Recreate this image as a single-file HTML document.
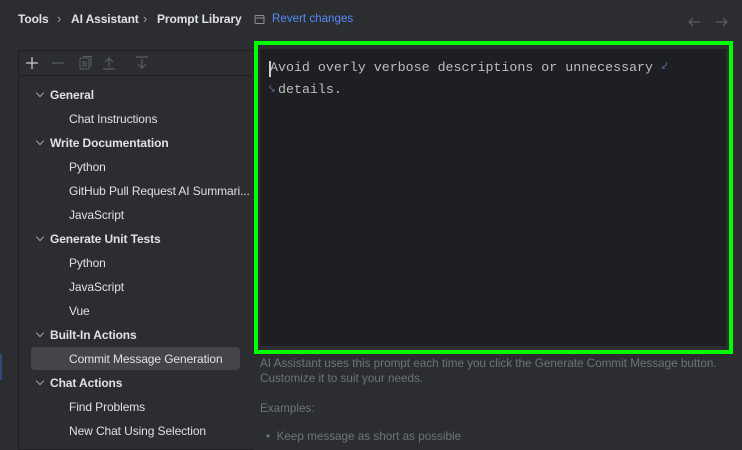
<!DOCTYPE html>
<html><head><meta charset="utf-8"><style>
*{margin:0;padding:0;box-sizing:border-box}
body{width:742px;height:446px;background:#2b2d30;overflow:hidden;position:relative;font-family:"Liberation Sans",sans-serif;color:#dfe1e5}
.a{position:absolute;white-space:nowrap}
.crumb{top:12px;font-size:12px;font-weight:bold;color:#dfe1e5;letter-spacing:-0.1px}
.sep{top:11px;font-size:13px;color:#9da0a8}
.left{left:18px;top:50px;width:235px;height:400px;border:1px solid #1e1f22;border-right:none;background:#2b2d30}
.tb{left:19px;top:75px;width:233px;height:1px;background:#1e1f22}
.row{font-size:12px;height:24px;line-height:24px;letter-spacing:-0.1px}
.h{font-weight:bold}
.chev{position:absolute;width:6px;height:6px;border-right:1.3px solid #9da0a8;border-bottom:1.3px solid #9da0a8;transform:rotate(45deg)}
.ed{left:254px;top:41px;width:479px;height:313px;border:4px solid #00ff00;background:#2b2d30}
.edin{left:260px;top:49px;width:466px;height:297px;background:#1e1f22}
.mono{font-family:"Liberation Mono",monospace;font-size:13.3px;color:#bcbec4;letter-spacing:0}
.desc{font-size:11.7px;color:#6f737a}
</style></head><body>
<div class="a crumb" style="left:18px">Tools</div>
<div class="a sep" style="left:57px">›</div>
<div class="a crumb" style="left:71px">AI Assistant</div>
<div class="a sep" style="left:143px">›</div>
<div class="a crumb" style="left:157px">Prompt Library</div>
<svg class="a" style="left:254px;top:14px" width="11" height="11"><rect x="1" y="1.5" width="9" height="8" rx="1" fill="none" stroke="#8c8f96" stroke-width="1"/><line x1="1" y1="4" x2="10" y2="4" stroke="#8c8f96"/></svg>
<div class="a" style="left:272px;top:12px;font-size:11.6px;color:#548af7">Revert changes</div>
<svg class="a" style="left:686px;top:15px" width="44" height="14"><path d="M3 7H14M3 7L7 3M3 7L7 11" stroke="#5a5d63" stroke-width="1.3" fill="none"/><path d="M30 7H41M41 7L37 3M41 7L37 11" stroke="#5a5d63" stroke-width="1.3" fill="none"/></svg>

<div class="a left"></div>
<div class="a tb"></div>
<svg class="a" style="left:24px;top:55px" width="125" height="16">
<path d="M8 2V14M2 8H14" stroke="#ced0d6" stroke-width="1.2"/>
<path d="M28 8H40" stroke="#5a5d63" stroke-width="1.2"/>
<rect x="56" y="3" width="9" height="11" rx="1" fill="none" stroke="#5a5d63"/><path d="M59 1.5H67V11" stroke="#5a5d63" fill="none"/><path d="M58 7H63M58 9H63M58 11H63" stroke="#5a5d63"/>
<path d="M85 3V12M81 7L85 3L89 7M79 14H91" stroke="#5a5d63" stroke-width="1.2" fill="none"/>
<path d="M112 2H124M118 4V13M114 9L118 13L122 9" stroke="#5a5d63" stroke-width="1.2" fill="none"/>
</svg>

<div class="a" style="left:31px;top:347px;width:209px;height:23px;background:#43454a;border-radius:4px"></div>
<div class="a" style="left:0;top:354px;width:2px;height:26px;background:#2e4a7a"></div>

<div class="chev" style="left:37px;top:90px"></div><div class="a row h" style="left:50px;top:83px">General</div>
<div class="a row" style="left:69px;top:107px">Chat Instructions</div>
<div class="chev" style="left:37px;top:138px"></div><div class="a row h" style="left:50px;top:131px">Write Documentation</div>
<div class="a row" style="left:69px;top:155px">Python</div>
<div class="a row" style="left:69px;top:179px">GitHub Pull Request AI Summari...</div>
<div class="a row" style="left:69px;top:203px">JavaScript</div>
<div class="chev" style="left:37px;top:234px"></div><div class="a row h" style="left:50px;top:227px">Generate Unit Tests</div>
<div class="a row" style="left:69px;top:251px">Python</div>
<div class="a row" style="left:69px;top:275px">JavaScript</div>
<div class="a row" style="left:69px;top:299px">Vue</div>
<div class="chev" style="left:37px;top:330px"></div><div class="a row h" style="left:50px;top:323px">Built-In Actions</div>
<div class="a row" style="left:69px;top:347px">Commit Message Generation</div>
<div class="chev" style="left:37px;top:378px"></div><div class="a row h" style="left:50px;top:371px">Chat Actions</div>
<div class="a row" style="left:69px;top:395px">Find Problems</div>
<div class="a row" style="left:69px;top:419px">New Chat Using Selection</div>

<div class="a ed"></div>
<div class="a edin"></div>
<div class="a" style="left:269px;top:61px;width:2px;height:16px;background:#ced0d6"></div>
<div class="a mono" style="left:270px;top:60px">Avoid overly verbose descriptions or unnecessary</div>
<div class="a mono" style="left:662px;top:61px;font-size:10px;color:#6f8fcf">⤦</div>
<div class="a mono" style="left:269px;top:84px;font-size:10px;color:#6f8fcf">⤥</div>
<div class="a mono" style="left:278px;top:82px">details.</div>

<div class="a desc" style="left:260px;top:357px">AI Assistant uses this prompt each time you click the Generate Commit Message button.</div>
<div class="a desc" style="left:260px;top:372px">Customize it to suit your needs.</div>
<div class="a desc" style="left:260px;top:402px">Examples:</div>
<div class="a desc" style="left:266px;top:430px">•&nbsp; Keep message as short as possible</div>
</body></html>
